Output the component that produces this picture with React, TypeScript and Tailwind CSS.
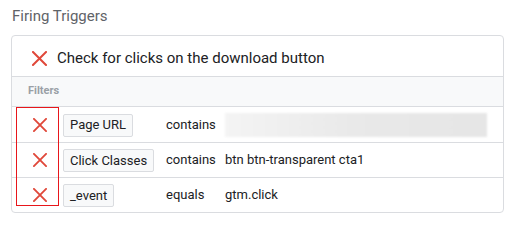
import { ReactNode } from 'react';

const font = { fontFamily: 'Roboto, "Liberation Sans", sans-serif' };

function CloseIcon({ className }: { className?: string }) {
  return (
    <svg viewBox="0 0 15 15" className={className} fill="none">
      <path d="M1 1 L14 14 M14 1 L1 14" stroke="#e0483a" strokeWidth="2" strokeLinecap="square" />
    </svg>
  );
}

function Chip({ children }: { children: ReactNode }) {
  return (
    <span className="inline-flex h-[23px] items-center rounded-[2px] border border-[#dadce0] bg-[#f8f9fa] px-[6px] text-[13px] text-[#202124]">
      {children}
    </span>
  );
}

type Filter = { variable: string; operator: string; value: ReactNode };

const filters: Filter[] = [
  {
    variable: 'Page URL',
    operator: 'contains',
    value: (
      <div className="h-[24px] w-[262px] bg-gradient-to-r from-[#f4f4f4] via-[#e9e9e9] to-[#e6e6e6] blur-[1px]" />
    ),
  },
  { variable: 'Click Classes', operator: 'contains', value: 'btn btn-transparent cta1' },
  { variable: '_event', operator: 'equals', value: 'gtm.click' },
];

export default function App() {
  return (
    <div className="h-[228px] w-[509px] bg-white pt-[6px] pl-[12px]" style={font}>
      <h2 className="text-[15px] leading-[20px] text-[#5f6368]">Firing Triggers</h2>

      <div className="relative mt-[9px] ml-[-1px] w-[493px] rounded-[4px] border border-[#dadce0]">
        {/* Trigger name */}
        <div className="flex h-[40px] items-center pt-[4px] pl-[20px]">
          <CloseIcon className="h-[15px] w-[15px]" />
          <span className="ml-[10px] text-[15px] text-[#202124]">
            Check for clicks on the download button
          </span>
        </div>

        {/* Filters header */}
        <div className="flex h-[31px] items-center border-y border-[#dadce0] bg-[#f8f9fa] pl-[16px] text-[11px] font-bold text-[#9aa0a6]">
          Filters
        </div>

        {/* Filter rows */}
        {filters.map((f, i) => (
          <div
            key={f.variable}
            className={`flex h-[35px] items-center ${i > 0 ? 'border-t border-[#dadce0]' : ''}`}
          >
            <div className="flex w-[51px] justify-center pl-[4px]">
              <CloseIcon className="h-[14px] w-[14px]" />
            </div>
            <div className="w-[103px]">
              <Chip>{f.variable}</Chip>
            </div>
            <div className="w-[59px] text-[13px] text-[#202124]">{f.operator}</div>
            <div className="text-[13px] text-[#202124]">{f.value}</div>
          </div>
        ))}

        {/* highlight annotation */}
        <div className="absolute top-[71px] left-[4px] h-[99px] w-[43px] border border-[#e8161b]" />
      </div>
    </div>
  );
}
